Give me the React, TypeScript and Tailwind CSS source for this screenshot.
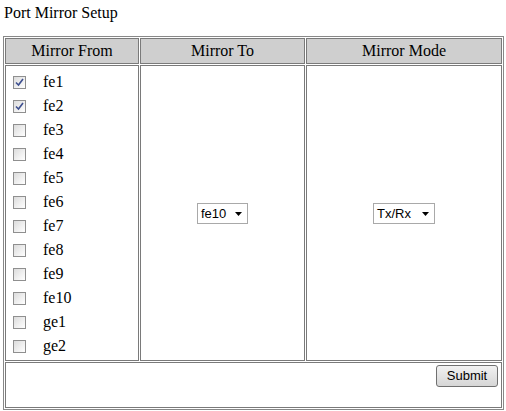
import React, { useState } from 'react';

const ports = ['fe1', 'fe2', 'fe3', 'fe4', 'fe5', 'fe6', 'fe7', 'fe8', 'fe9', 'fe10', 'ge1', 'ge2'];

// Pantalla de configuración del puerto espejo (estilo formulario clásico)
export default function App() {
  const [checked, setChecked] = useState<Record<string, boolean>>({ fe1: true, fe2: true });

  return (
    <div className="min-h-screen bg-white p-[3px] font-['Liberation_Serif'] text-[16px] text-black">
      <div className="pl-px leading-[20px] mb-[13px]">Port Mirror Setup</div>

      <table className="w-[501px] border-separate border-spacing-[1px] border border-[#888888]">
        <thead>
          <tr>
            <th className="w-[134px] h-[26px] border border-[#7a7a7a] bg-[#cfcfcf] font-normal">Mirror From</th>
            <th className="w-[165px] border border-[#7a7a7a] bg-[#cfcfcf] font-normal">Mirror To</th>
            <th className="border border-[#7a7a7a] bg-[#cfcfcf] font-normal">Mirror Mode</th>
          </tr>
        </thead>
        <tbody>
          <tr>
            <td className="border border-[#7a7a7a] align-top pt-[4px] pb-[2px]">
              {ports.map((p) => (
                <label key={p} className="flex items-center h-[24px] cursor-default">
                  <Checkbox on={!!checked[p]} onChange={() => setChecked((c) => ({ ...c, [p]: !c[p] }))} />
                  <span className="ml-[17px]">{p}</span>
                </label>
              ))}
            </td>
            <td className="border border-[#7a7a7a] text-center align-middle">
              <FakeSelect value="fe10" />
            </td>
            <td className="border border-[#7a7a7a] text-center align-middle">
              <FakeSelect value="Tx/Rx" wide />
            </td>
          </tr>
          <tr>
            <td colSpan={3} className="h-[46px] border border-[#7a7a7a] align-top text-right pt-0 pr-[3px]">
              <button
                type="button"
                className="h-[22px] w-[62px] rounded-[3px] border border-[#707070] bg-gradient-to-b from-[#f2f2f2] to-[#d6d6d6] font-['Liberation_Sans'] text-[13px] leading-none text-black"
              >
                Submit
              </button>
            </td>
          </tr>
        </tbody>
      </table>
    </div>
  );
}

function Checkbox({ on, onChange }: { on: boolean; onChange: () => void }) {
  return (
    <span
      onClick={onChange}
      className="ml-[7px] inline-flex h-[13px] w-[13px] items-center justify-center border border-[#8f8f8f] bg-gradient-to-br from-[#dcdcdc] to-[#ffffff]"
    >
      {on && (
        <svg width="9" height="9" viewBox="0 0 9 9">
          <path d="M1 4.5 L3.5 7 L8 1" fill="none" stroke="#3d4f8f" strokeWidth="1.6" />
        </svg>
      )}
    </span>
  );
}

function FakeSelect({ value, wide }: { value: string; wide?: boolean }) {
  return (
    <span
      className={
        'inline-flex h-[21px] items-center justify-between border border-[#a9a9a9] bg-white pl-[3px] pr-[5px] font-[\'Liberation_Sans\'] text-[13px] leading-none ' +
        (wide ? 'w-[62px]' : 'w-[51px]')
      }
    >
      {value}
      <svg width="7" height="4" viewBox="0 0 7 4">
        <path d="M0 0 H7 L3.5 4 Z" fill="#000" />
      </svg>
    </span>
  );
}
